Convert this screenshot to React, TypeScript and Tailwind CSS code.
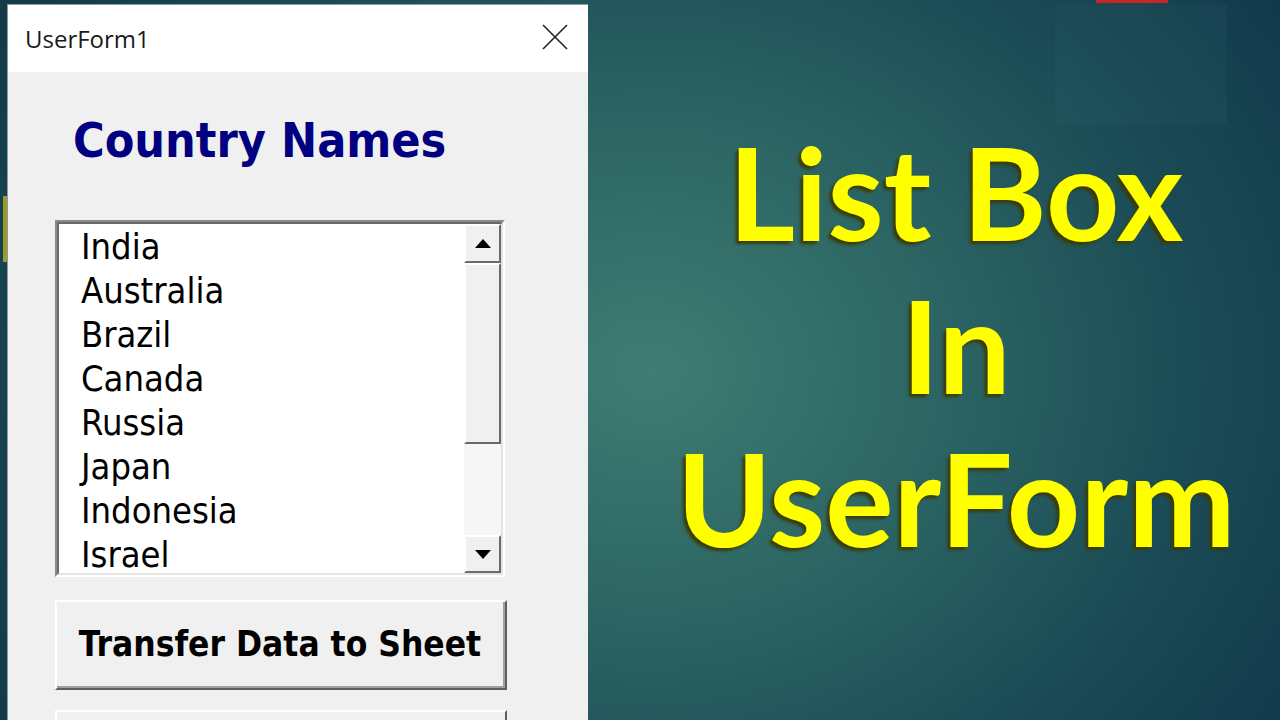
import React from "react";

const countries = ["India", "Australia", "Brazil", "Canada", "Russia", "Japan", "Indonesia", "Israel"];

const tahoma = "font-['DejaVu_Sans_Condensed','DejaVu_Sans',sans-serif] [font-stretch:condensed]";

function UpArrow() {
  return (
    <svg width="16" height="9" viewBox="0 0 16 9">
      <polygon points="8,0 16,9 0,9" fill="#000" />
    </svg>
  );
}

function DownArrow() {
  return (
    <svg width="16" height="9" viewBox="0 0 16 9">
      <polygon points="0,0 16,0 8,9" fill="#000" />
    </svg>
  );
}

export default function App() {
  return (
    <div className="relative flex h-[720px] w-[1280px] overflow-hidden bg-[radial-gradient(ellipse_760px_640px_at_650px_370px,#3f7d73_0%,#2c6563_38%,#1b4b56_72%,#123a4b_100%)]">
      {/* left yellow tick behind window */}
      <div className="absolute left-[3px] top-[196px] h-[66px] w-[4px] bg-[#9c9a2a]" />
      {/* red bar top right */}
      <div className="absolute left-[1096px] top-0 h-[3px] w-[72px] bg-[#c8242a]" />
      {/* faint rectangle */}
      <div className="absolute left-[1055px] top-[3px] h-[122px] w-[172px] bg-[#3a7a80]/10" />

      {/* UserForm window */}
      <div className="relative z-10 ml-[7px] mt-[4px] flex w-[581px] shrink-0 flex-col overflow-hidden border-l border-t border-[#8e9a9c] bg-[#f0f0f0]">
        <div className="flex h-[67px] shrink-0 items-center justify-between bg-white pl-[17px] pr-[20px]">
          <span className="font-['Open_Sans',sans-serif] text-[24px] leading-none text-[#1a1a1a]">UserForm1</span>
          <svg width="26" height="26" viewBox="0 0 26 26" className="mt-[-4px]">
            <path d="M1 1 L25 25 M25 1 L1 25" stroke="#222" strokeWidth="1.6" />
          </svg>
        </div>
        <div className="flex shrink-0 flex-col pl-[47px]">
          <div className={`${tahoma} mt-[44px] h-[48px] shrink-0 pl-[18px] text-[48px] font-bold leading-none text-[#000080]`}>
            Country Names
          </div>

          {/* ListBox */}
          <div className="mt-[56px] flex h-[357px] w-[450px] shrink-0 border-2 border-t-[#8a8a8a] border-l-[#8a8a8a] border-b-[#ffffff] border-r-[#ffffff]">
            <div className="flex flex-1 border-2 border-t-[#6a6a6a] border-l-[#6a6a6a] border-b-[#e4e4e4] border-r-[#e4e4e4] bg-white">
              <div className={`${tahoma} flex-1 pl-[22px] pt-[1px] text-[36px] leading-[44px] text-black`}>
                {countries.map((c) => (
                  <div key={c} className="h-[44px] whitespace-nowrap">{c}</div>
                ))}
              </div>
              {/* scrollbar */}
              <div className="flex w-[37px] flex-col bg-[#f4f4f4]">
                <div className="flex h-[39px] shrink-0 items-center justify-center border-2 border-t-[#ffffff] border-l-[#ffffff] border-b-[#6a6a6a] border-r-[#6a6a6a] bg-[#f0f0f0]">
                  <UpArrow />
                </div>
                <div className="h-[181px] shrink-0 border-2 border-t-[#ffffff] border-l-[#ffffff] border-b-[#6a6a6a] border-r-[#6a6a6a] bg-[#f0f0f0]" />
                <div className="flex-1 bg-[#f6f6f6]" />
                <div className="flex h-[38px] shrink-0 items-center justify-center border-2 border-t-[#ffffff] border-l-[#ffffff] border-b-[#6a6a6a] border-r-[#6a6a6a] bg-[#f0f0f0]">
                  <DownArrow />
                </div>
              </div>
            </div>
          </div>

          {/* Button */}
          <div className="mt-[23px] flex h-[90px] w-[452px] shrink-0 border-2 border-t-[#ffffff] border-l-[#ffffff] border-b-[#5e5e5e] border-r-[#5e5e5e]">
            <div className="flex flex-1 items-center justify-center border-b-2 border-r-2 border-b-[#a0a0a0] border-r-[#a0a0a0] bg-[#f0f0f0]">
              <span className={`${tahoma} whitespace-nowrap text-[35px] font-bold leading-none text-black`}>Transfer Data to Sheet</span>
            </div>
          </div>

          {/* Second button (cut off) */}
          <div className="mt-[20px] h-[60px] w-[452px] shrink-0 border-2 border-t-[#ffffff] border-l-[#ffffff] border-r-[#5e5e5e] border-b-transparent bg-[#f0f0f0]" />
        </div>
      </div>

      {/* Right title */}
      <div className="flex flex-1 flex-col items-center pl-[44px] pt-[115px]">
        <div className="text-center font-['Lato',sans-serif] text-[128px] font-bold leading-[153px] text-[#ffff00] [text-shadow:-3px_3px_3px_#3b3d05]">
          <div>List Box</div>
          <div>In</div>
          <div>UserForm</div>
        </div>
      </div>
    </div>
  );
}
